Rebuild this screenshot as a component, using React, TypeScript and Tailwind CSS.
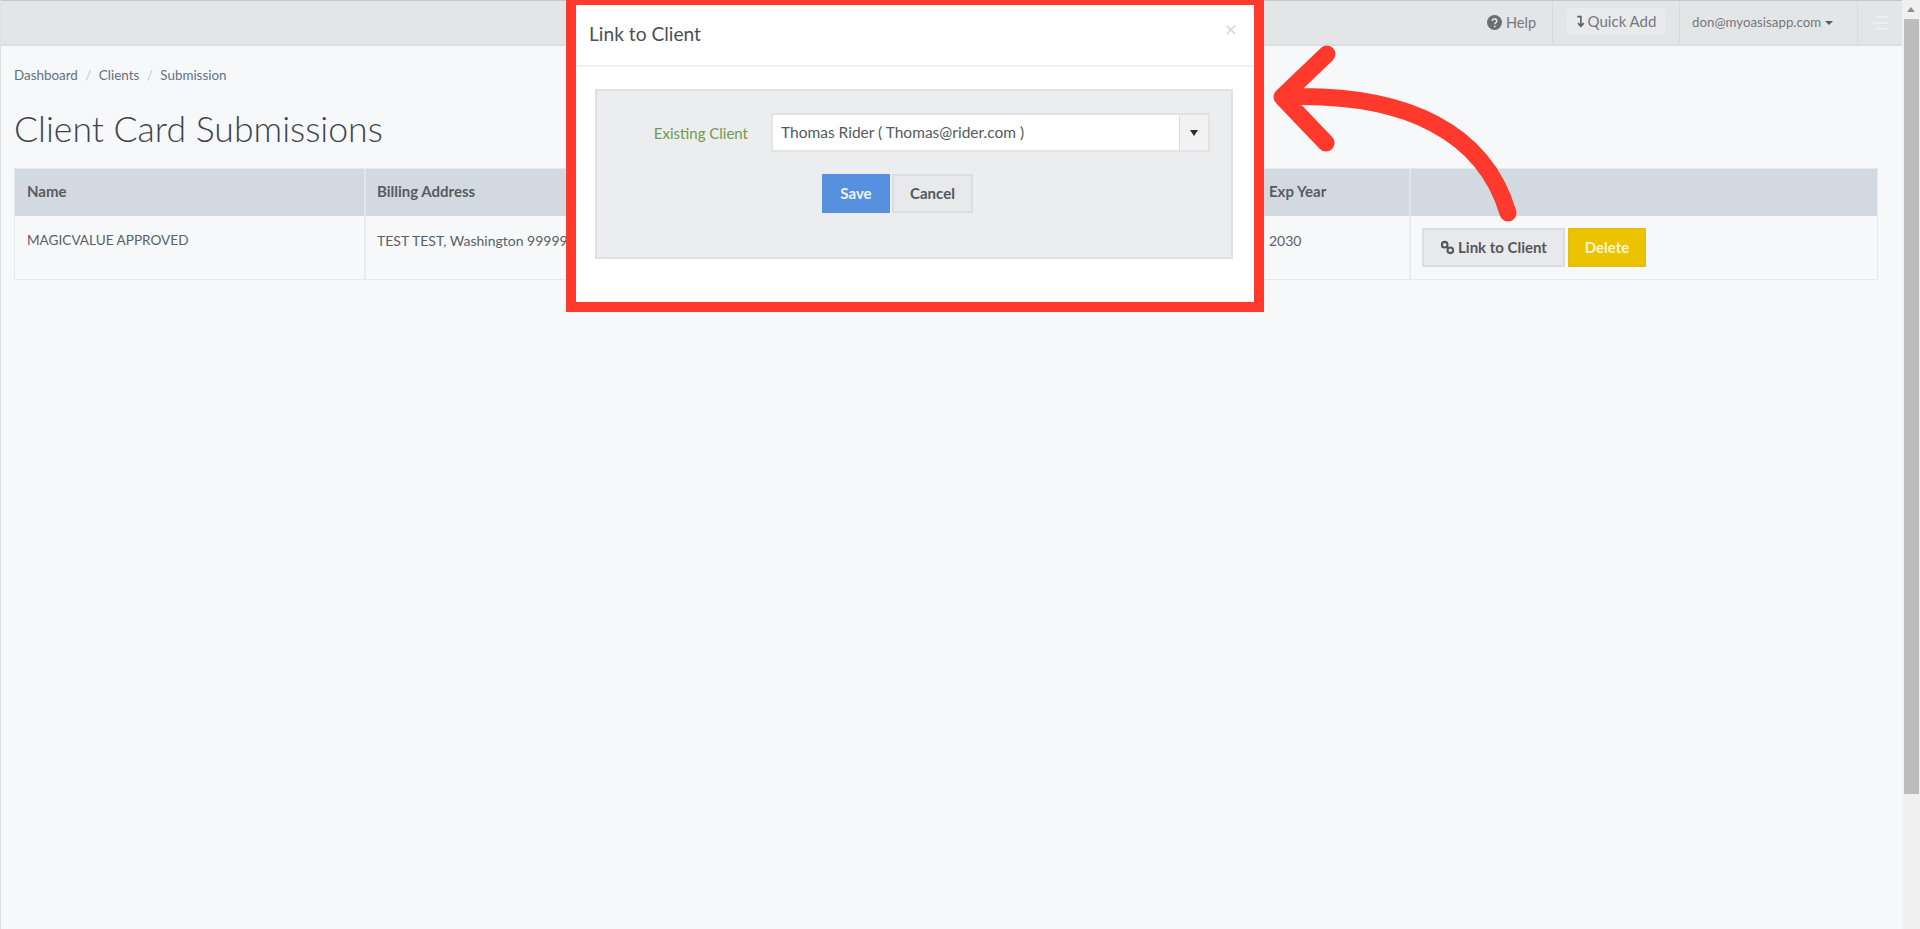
const FONT = "font-['Lato','Noto_Sans',sans-serif]";

function Arrow() {
  return (
    <svg className="absolute left-[1270px] top-[40px] w-[260px] h-[190px]" viewBox="0 0 260 190" fill="none">
      <path
        d="M238 173 C215 95 140 52 12 57 M57 14 L12 57 L56 103"
        stroke="#ff3a2d"
        strokeWidth="17"
        strokeLinecap="round"
        strokeLinejoin="round"
      />
    </svg>
  );
}

export default function App() {
  return (
    <div className={`${FONT} relative h-[929px] overflow-hidden bg-[#f6f8fa] text-[14px] text-[#5a5f66]`}>
      <div className="flex h-full">
        <div className="flex-1 min-w-0 border-l border-[#dfe1e3]">
          {/* Top bar */}
          <header className="h-[46px] flex justify-end items-stretch bg-[#e4e5e7] border-t border-[#c4c5c7] border-b-2 border-b-[#dcdee1]">
            <div className="flex items-center gap-1 pl-[22px] w-[88px] border-r border-[#d9dadc] text-[14.500px] text-[#75787d]">
              <svg viewBox="0 0 24 24" className="size-[15px] shrink-0" fill="#6b6e73">
                <circle cx="12" cy="12" r="12" />
                <path d="M8.5 9.5a3.5 3.5 0 1 1 5.4 3c-1.1.7-1.4 1.1-1.4 2.2M12.5 17v2.4" stroke="#e4e5e7" strokeWidth="2.6" fill="none" />
              </svg>
              <span>Help</span>
            </div>
            <div className="flex items-center justify-center w-[127px] border-r border-[#d9dadc]">
              <div className="flex items-center gap-[3px] h-[27px] w-[98px] justify-center rounded-sm bg-[#e9eaec] text-[15px] text-[#75787d] mb-[2px]">
                <svg viewBox="0 0 10 16" className="w-[9px] h-[13px]" fill="none" stroke="#5c5f64" strokeWidth="2">
                  <path d="M1 2h4.500v11M2 10l3.500 4 3.500-4" />
                </svg>
                <span>Quick Add</span>
              </div>
            </div>
            <div className="flex items-center gap-1 pl-[12px] w-[178px] border-r border-[#d9dadc] text-[13.300px] text-[#75787d]">
              <span>don@myoasisapp.com</span>
              <span className="w-0 h-0 border-x-[4px] border-x-transparent border-t-[4px] border-t-[#5a5f66]" />
            </div>
            <div className="flex flex-col items-center justify-center gap-1 w-[44px]">
              <span className="w-[10px] h-[2px] bg-[#eceded] ml-[4px]" />
              <span className="w-[18px] h-[2px] bg-[#eceded]" />
              <span className="w-[14px] h-[2px] bg-[#eceded] ml-[4px]" />
            </div>
          </header>

          <div className="px-[13px]">
            {/* Breadcrumb */}
            <nav className="flex items-center gap-[7.500px] pt-[19px] text-[13.400px] text-[#64707f]">
              <span>Dashboard</span>
              <span className="text-[#c3c7cc]">/</span>
              <span>Clients</span>
              <span className="text-[#c3c7cc]">/</span>
              <span>Submission</span>
            </nav>

            <h1 className="mt-[23px] text-[35.600px] leading-[42px] font-light text-[#3e444c]">Client Card Submissions</h1>

            {/* Table */}
            <div className="mt-[18px] border border-[#e6e8eb] w-[1864px]">
              <div className="flex h-[47px] bg-[#d2d9e0] font-bold text-[15px] text-[#575c63]">
                <div className="w-[351px] flex items-center pl-[12px] pb-[3px] border-r-2 border-[#e2e6ea]">Name</div>
                <div className="w-[890px] flex items-center pl-[11px] pb-[3px]">Billing Address</div>
                <div className="w-[155px] flex items-center pl-[11px] pb-[3px] border-x-2 border-[#e2e6ea]">Exp Year</div>
                <div className="flex-1" />
              </div>
              <div className="flex h-[63px]">
                <div className="w-[351px] pl-[12px] pt-[14px] border-r-2 border-[#e9ebee] text-[13.600px]">MAGICVALUE APPROVED</div>
                <div className="w-[890px] pl-[11px] pt-[14px]">TEST TEST, Washington 99999</div>
                <div className="w-[155px] pl-[11px] pt-[14px] border-x-2 border-[#e9ebee]">2030</div>
                <div className="flex-1 flex items-center gap-[3px] pl-[11px]">
                  <button className="flex items-center justify-center gap-[3px] w-[143px] h-[39px] bg-[#e8e9eb] border-2 border-[#dcdde0] font-bold text-[15px] text-[#53575d]">
                    <svg viewBox="0 0 16 16" className="size-[15px]" fill="none" stroke="#53575d" strokeWidth="2.200">
                      <circle cx="5" cy="5" r="3" />
                      <circle cx="11" cy="11" r="3" />
                      <path d="M7 7l2 2" />
                    </svg>
                    Link to Client
                  </button>
                  <button className="w-[78px] h-[39px] bg-[#ecc300] border-2 border-[#e4bf08] font-bold text-[15px] text-[#fdf6d2]">Delete</button>
                </div>
              </div>
            </div>
          </div>
        </div>

        {/* Scrollbar */}
        <div className="w-[18px] flex flex-col items-center bg-[#f0f0f0]">
          <span className="mt-[7px] w-0 h-0 border-x-[4px] border-x-transparent border-b-[5px] border-b-[#8f8f8f]" />
          <div className="mt-[7px] w-[15px] h-[775px] ml-[1px] bg-[#bcbcbc]" />
        </div>
      </div>

      {/* Modal */}
      <div className="absolute left-[566px] top-0 w-[698px] h-[312px] bg-white border-x-[10px] border-t-[5px] border-b-[10px] border-[#ff3a2d]">
        <div className="h-[62px] flex items-center justify-between px-[13px] border-b-2 border-[#eff0f2]">
          <span className="text-[19.200px] text-[#4b5057] mb-[2px]">Link to Client</span>
          <span className="text-[21px] text-[#d8d9db] mb-[12px] mr-[4px]">×</span>
        </div>
        <div className="mx-[19px] mt-[22px] h-[170px] w-[638px] bg-[#ebedef] border-2 border-[#dfe1e4] pt-[22px]">
          <div className="flex items-center">
            <label className="w-[151px] pt-[1px] text-right text-[15px] text-[#6f9a4e]">Existing Client</label>
            <div className="ml-[23px] w-[439px] h-[39px] flex bg-white border-2 border-[#e2e3e6]">
              <div className="flex-1 flex items-center pl-[8px] pt-[1px] text-[15.500px] text-[#555a60]">Thomas Rider ( Thomas@rider.com )</div>
              <div className="w-[29px] flex items-center justify-center bg-[#f2f2f3] border-l border-[#dcdde0]">
                <span className="w-0 h-0 border-x-[4.500px] border-x-transparent border-t-[6px] border-t-[#2b2b2b]" />
              </div>
            </div>
          </div>
          <div className="flex gap-[2px] mt-[22px] pl-[225px]">
            <button className="w-[68px] h-[39px] bg-[#5890e0] font-bold text-[15px] text-[#eef3fb]">Save</button>
            <button className="w-[81px] h-[39px] bg-[#e8e9eb] border-2 border-[#dcdde0] font-bold text-[15px] text-[#53575d]">Cancel</button>
          </div>
        </div>
      </div>

      <Arrow />
    </div>
  );
}
